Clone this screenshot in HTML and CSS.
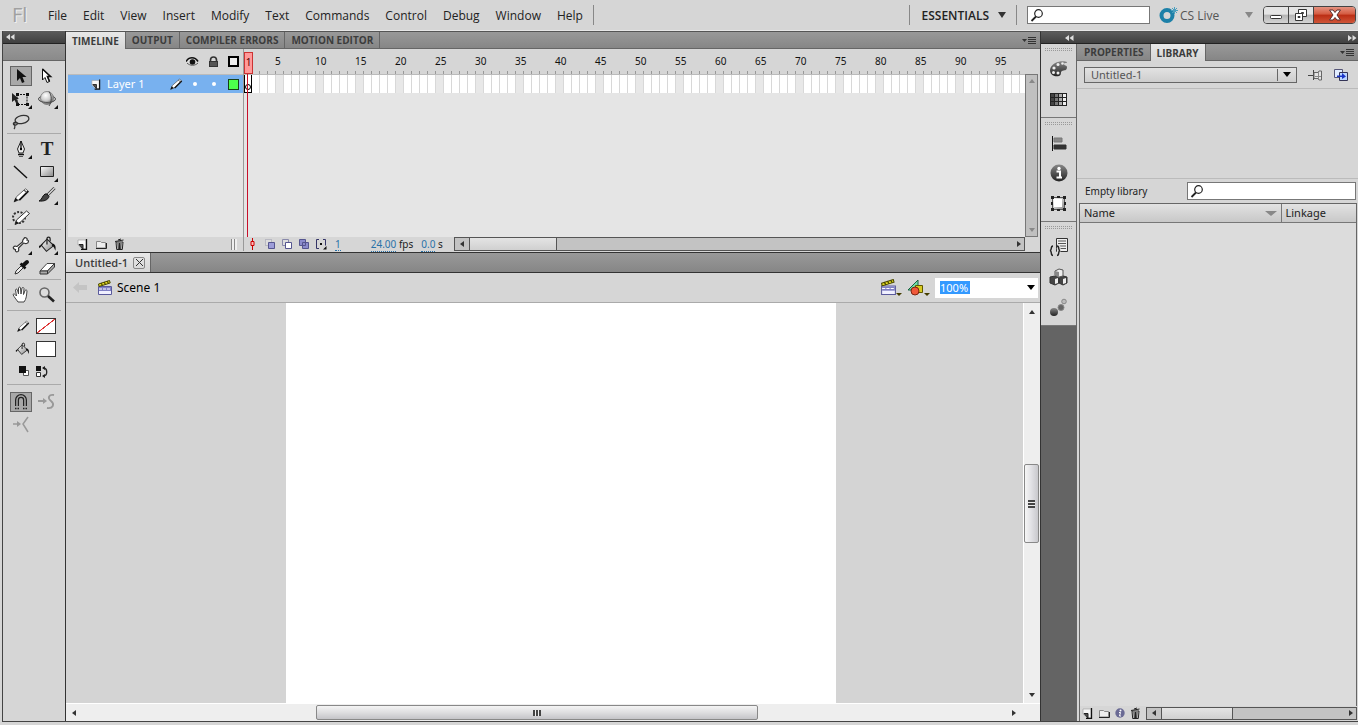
FILE: index.html
```html
<!DOCTYPE html>
<html lang="en">
<head>
    <meta charset="UTF-8">
    <meta name="viewport" content="width=device-width, initial-scale=1.0">
    <title>Untitled-1</title>
    <link rel="stylesheet" href="styles.css">
</head>
<body>
    <!-- shared icons and gradients -->
    <svg class="defs" width="0" height="0" aria-hidden="true">
        <defs>
            <linearGradient id="metal" x1="0" y1="0" x2="1" y2="1"><stop offset="0" stop-color="#fff"/><stop offset="1" stop-color="#888"/></linearGradient>
            <radialGradient id="ball" cx=".4" cy=".3" r=".8"><stop offset="0" stop-color="#fff"/><stop offset=".5" stop-color="#ccc"/><stop offset="1" stop-color="#444"/></radialGradient>
            <linearGradient id="dark" x1="0" y1="0" x2="0" y2="1"><stop offset="0" stop-color="#888"/><stop offset="1" stop-color="#222"/></linearGradient>
        </defs>
        <symbol id="mag" viewBox="0 0 14 14"><circle cx="8.500" cy="5.500" r="3.800" fill="none" stroke="#222" stroke-width="1.200"/><path d="M6 8.500 1.500 13" stroke="#222" stroke-width="1.800"/></symbol>
        <symbol id="menu-lines" viewBox="0 0 14 9"><path d="M0 3h5L2.500 6z" fill="#333"/><path d="M6 1.500h8M6 3.500h8M6 5.500h8M6 7.500h8" stroke="#333"/></symbol>
        <symbol id="new-page" viewBox="0 0 11 11"><path d="M1 1h8v9H5L1 6z" fill="#f8f8f8" stroke="#999" stroke-width=".6"/><path d="M9.500 0v10.500H4" stroke="#111" stroke-width="1.300" fill="none"/><path d="M2 5.500h4V10z" fill="#555" stroke="#222"/></symbol>
        <symbol id="folder" viewBox="0 0 12 11"><path d="M1.500 9V2.500h4l1 1h4V9z" fill="#eee" stroke="#888"/><path d="M1 9.500h10.500V4" stroke="#222" fill="none"/></symbol>
        <symbol id="trash" viewBox="0 0 11 12"><path d="M2 4h7l-.7 7.500H2.700z" fill="#ddd" stroke="#222"/><path d="M1 3.500 9.500 2M4 2l3-1M4 5l.3 6M5.500 5v6M7 5l-.3 6" stroke="#222"/></symbol>
        <symbol id="pencil" viewBox="0 0 16 16"><path d="M2 14l2-4.500 8-7 2.500 2L7 12z" fill="#fff" stroke="#555" stroke-width=".8"/><path d="M1.500 14.500 3 10.500l2.500 2z" fill="#111"/><path d="M6.500 12.500 14.500 4.500" stroke="#111" stroke-width="1.600"/><path d="M10.500 3.500l2.500 2" stroke="#555"/></symbol>
        <symbol id="bucket" viewBox="0 0 18 16"><path d="M8.500 3 15 9l-7 5.500L3 8.500z" fill="url(#metal)" stroke="#222"/><path d="M8.500 8V2.500a1.500 1.500 0 0 1 3 0V5" fill="none" stroke="#222" stroke-width="1.200"/><path d="M3 8.500C.500 9 .500 10 1.500 11.500L5 7.500zM14 7c3 1 3 4 2.500 7-1-2-1-4-3.500-5z" fill="#111"/></symbol>
        <symbol id="clapper" viewBox="0 0 16 16"><path d="M1.500 6.500h13v8h-13z" fill="#f0f0ff" stroke="#5a5a9c"/><path d="M2 7h12v4H2z" fill="#8080c4"/><path d="M2 9h12" stroke="#fff" stroke-dasharray="3 1"/><path d="M1.500 4 12.500.500l.7 2.500L2 6.500z" fill="#e5dc22" stroke="#4b4800"/><path d="m4 3 1.500 2.500M7 2l1.500 2.500M10 1l1.500 2.500" stroke="#4b4800" stroke-width="1.200"/></symbol>
    </svg>

    <header class="app-bar">
        <div class="logo">Fl</div>
        <nav class="menu">
            <a href="#">File</a>
            <a href="#">Edit</a>
            <a href="#">View</a>
            <a href="#">Insert</a>
            <a href="#">Modify</a>
            <a href="#">Text</a>
            <a href="#">Commands</a>
            <a href="#">Control</a>
            <a href="#">Debug</a>
            <a href="#">Window</a>
            <a href="#">Help</a>
        </nav>
        <button class="workspace">ESSENTIALS <span class="tri"></span></button>
        <label class="search top-search"><svg width="14" height="14"><use href="#mag"/></svg><input type="text" aria-label="Search help"></label>
        <button class="cs-live">
            <svg width="19" height="18" viewBox="0 0 19 18"><circle cx="8" cy="9.500" r="5.500" fill="none" stroke="#1c80a8" stroke-width="4"/><path d="M15.500 1v7M12 4.500h7M13 2l5 5M18 2l-5 5" stroke="#4b9fbe"/></svg>
            <span>CS Live</span><span class="tri grey"></span>
        </button>
        <div class="window-buttons">
            <button aria-label="Minimize"><svg width="14" height="12" viewBox="0 0 14 12"><rect x="1.500" y="6.500" width="11" height="3" rx="1" fill="#fff" stroke="#333"/></svg></button>
            <button aria-label="Restore"><svg width="14" height="12" viewBox="0 0 14 12"><path d="M4.500.500h8v7h-8z" fill="#fff" stroke="#333"/><path d="M7.500 3.500h2v1h-2z" fill="#bbb" stroke="#333"/><path d="M1.500 4.500h7v7h-7z" fill="#fff" stroke="#333"/><path d="M4 7.500h2v1H4z" fill="#bbb" stroke="#333"/></svg></button>
            <button class="close" aria-label="Close"><svg width="14" height="12" viewBox="0 0 14 12"><path d="M1.500 1h3.500l2 2.500L9 1h3.500L9 6l3.500 5H9L7 8.500 5 11H1.500L5 6z" fill="#fff" stroke="#5a3030"/></svg></button>
        </div>
    </header>

    <main class="workspace-area">
        <aside class="tools">
            <div class="dark-head"><svg width="9" height="6" viewBox="0 0 9 6"><path d="M4 0v6L0 3zM8.500 0v6l-4-3z" fill="#ddd"/></svg></div>
            <div class="grab"></div>
            <div class="tool-group">
                <button class="on" aria-label="Selection"><svg width="20" height="18" viewBox="0 0 20 18"><path d="M6 2v12l3-3 2 5 2.500-1-2-5h4z" fill="#111"/></svg></button>
                <button aria-label="Subselection"><svg width="20" height="18" viewBox="0 0 20 18"><path d="M5.500 2v11L8 10.500l2 5 2.500-1-2-5h3z" fill="#fff" stroke="#111"/><path d="M5.500 2l8 7.500h-3l2 5" fill="none" stroke="#111" stroke-width="1.600"/></svg></button>
                <button class="more" aria-label="Free Transform"><svg width="20" height="18" viewBox="0 0 20 18"><path d="M6 4.500h10v10H6z" fill="none" stroke="#111" stroke-dasharray="2 1"/><path d="M5 3h3v3H5zM15 3h3v3h-3zM5 13h3v3H5zM15 13h3v3h-3z" fill="#111"/><path d="M1 3v9l2.500-2 2 4 2-1-2-4H8z" fill="#222"/></svg></button>
                <button class="more" aria-label="3D Rotation"><svg width="20" height="18" viewBox="0 0 20 18"><ellipse cx="10" cy="9" rx="8.500" ry="3.500" fill="none" stroke="#444"/><circle cx="10" cy="8" r="6.500" fill="url(#ball)" stroke="#777" stroke-width=".8"/><path d="M3.500 11c3 2 10 2 13 0" fill="none" stroke="#555"/><path d="M12 1.500c3 4 3 10 0 14.500" fill="none" stroke="#444"/></svg></button>
                <button aria-label="Lasso"><svg width="20" height="18" viewBox="0 0 20 18"><ellipse cx="11" cy="6.500" rx="7" ry="4" transform="rotate(-12 11 6.500)" fill="none" stroke="#333" stroke-width="1.300"/><path d="M5 9c-4 0-3 4 0 3s0-4-1-2 1 4-1 6" fill="none" stroke="#333" stroke-width="1.200"/></svg></button>
            </div>
            <div class="tool-group">
                <button class="more" aria-label="Pen"><svg width="20" height="18" viewBox="0 0 20 18"><path d="M10 1 6.500 9 8 13h4l1.500-4z" fill="#eee" stroke="#222"/><path d="M10 1v8M7 14.500h6" stroke="#111" stroke-width="1.300"/><circle cx="10" cy="9" r="1.200"/><path d="M8 16.500h4" stroke="#555"/></svg></button>
                <button class="type" aria-label="Text">T</button>
                <button aria-label="Line"><svg width="20" height="18" viewBox="0 0 20 18"><path d="m3 3 13 12" stroke="#111" stroke-width="1.400"/></svg></button>
                <button class="more" aria-label="Rectangle"><svg width="20" height="18" viewBox="0 0 20 18"><path d="M3.500 3.500h13v10h-13z" fill="url(#metal)" stroke="#222"/></svg></button>
                <button aria-label="Pencil"><svg width="18" height="18"><use href="#pencil"/></svg></button>
                <button class="more" aria-label="Brush"><svg width="20" height="18" viewBox="0 0 20 18"><path d="m17.500 2-7 7" stroke="#333" stroke-width="3"/><path d="m17.500 2-7 7" stroke="#ddd" stroke-width="1.500"/><path d="M10 8l2 2.500C11 14 7 15.500 2 15c3-1 3-5 6-7z" fill="#444" stroke="#111"/></svg></button>
                <button aria-label="Deco"><svg width="20" height="18" viewBox="0 0 20 18"><ellipse cx="8" cy="8.500" rx="6" ry="5.500" fill="none" stroke="#333" stroke-width="2" stroke-dasharray="2 1.500"/><path d="M4 15.500l1.500-4.500 10-9 3 2.500-9.500 9z" fill="#fff" stroke="#333"/><path d="M4 15.500l1.500-3.500 2 2z" fill="#111"/></svg></button>
            </div>
            <div class="tool-group">
                <button class="more" aria-label="Bone"><svg width="20" height="18" viewBox="0 0 20 18"><path d="M13 2.500c1-2 4 0 3 1.500 2 0 2 3-.5 3.500-1.500.500-2-.5-3-.5L7.500 12c0 1 1 2-.5 3.500-2 1-3-.5-2.500-2-2 0-3-2-1.500-3 1-1 2 0 3 0L11.500 6c0-1.500.2-2.500 1.500-3.500z" fill="#fff" stroke="#333" stroke-width="1.200"/></svg></button>
                <button class="more" aria-label="Paint Bucket"><svg width="19" height="17"><use href="#bucket"/></svg></button>
                <button aria-label="Eyedropper"><svg width="20" height="18" viewBox="0 0 20 18"><path d="m4 15 1-3 6-6 2 2-6 6z" fill="#eee" stroke="#333"/><path d="m9.500 4.500 5 5" stroke="#111" stroke-width="2.500"/><path d="M12 6.500l4-3.500" stroke="#111" stroke-width="4" stroke-linecap="round"/></svg></button>
                <button aria-label="Eraser"><svg width="20" height="18" viewBox="0 0 20 18"><path d="m3 12 7-7.500h7.500l-7 7.500z" fill="#fff" stroke="#444"/><path d="M3 12h7.500v3H3zM10.500 12l7-7.500V8l-7 7z" fill="#aaa" stroke="#333"/></svg></button>
            </div>
            <div class="tool-group view-group">
                <button aria-label="Hand"><svg width="20" height="18" viewBox="0 0 20 18"><path d="M7 16C5 13 3 11 2 8.500c1-1 2-.5 3.500 1.500L4.500 4c.5-1.500 1.500-1 2 0l1 4V2c.5-1.500 2-1 2 0l.5 6 1-6c.5-1 2-.5 2 .5l-.5 6L14 4.500c1-1 2-.5 2 .5-.5 4-.5 8-3 11z" fill="#fff" stroke="#444"/></svg></button>
                <button aria-label="Zoom"><svg width="20" height="18" viewBox="0 0 20 18"><circle cx="7.500" cy="6.500" r="4.500" fill="#ddd" stroke="#666" stroke-width="1.600"/><path d="m11 10 6 5.500" stroke="#222" stroke-width="2.600"/></svg></button>
            </div>
            <div class="tool-group colors">
                <svg width="14" height="14"><use href="#pencil"/></svg>
                <button class="swatch none" aria-label="Stroke color"></button>
                <svg width="15" height="14"><use href="#bucket"/></svg>
                <button class="swatch" aria-label="Fill color"></button>
                <button aria-label="Black and white"><svg width="11" height="11" viewBox="0 0 11 11"><path d="M4.500 4.500h5v5h-5z" fill="#fff" stroke="#555"/><path d="M0 0h7v7H0z" fill="#111"/></svg></button>
                <button aria-label="Swap colors"><svg width="13" height="12" viewBox="0 0 13 12"><path d="M0 0h5v5H0z" fill="#111"/><path d="M.5 6.500h4v4h-4z" fill="#fff" stroke="#333"/><path d="M7 2c5 0 5 8 0 8" fill="none" stroke="#222" stroke-width="1.300"/><path d="M9 0v4L6 2zM9 8v4l-3-2z" fill="#222"/></svg></button>
            </div>
            <div class="tool-group last">
                <button class="on" aria-label="Snap to Objects"><svg width="16" height="17" viewBox="0 0 16 17"><path d="M4 13V7a4 4 0 0 1 8 0v6" fill="none" stroke="#222" stroke-width="4"/><path d="M4 13V7a4 4 0 0 1 8 0v6" fill="none" stroke="#aaa" stroke-width="1.500"/><path d="M2 15.500h4M10 15.500h4" stroke="#222" stroke-width="1.500" stroke-dasharray="1.500 1"/></svg></button>
                <button aria-label="Smooth"><svg width="20" height="18" viewBox="0 0 20 18"><path d="M1 8h6M17 2c-5-1-7 3-3 6s2 8-4 7" fill="none" stroke="#999" stroke-width="1.800"/><path d="M6 5v6l4-3z" fill="#999"/></svg></button>
                <button aria-label="Straighten"><svg width="20" height="18" viewBox="0 0 20 18"><path d="M2 8h6M17 1l-5 7 5 8" fill="none" stroke="#999" stroke-width="1.500"/><path d="M6 5v6l4-3z" fill="#999"/></svg></button>
            </div>
        </aside>

        <section class="center">
            <div class="tabs">
                <button class="tab active">TIMELINE</button>
                <button class="tab">OUTPUT</button>
                <button class="tab">COMPILER ERRORS</button>
                <button class="tab">MOTION EDITOR</button>
                <svg class="panel-menu" width="14" height="9"><use href="#menu-lines"/></svg>
            </div>

            <div class="timeline">
                <div class="layers">
                    <div class="layer-head">
                        <svg width="13" height="10" viewBox="0 0 13 10"><path d="M0 5c3-5 9-5 12 0-3 4-9 4-12 0z" fill="#ddd"/><path d="M0 4.500c3-5 9-5 12 0" fill="none" stroke="#111" stroke-width="1.500"/><circle cx="6.500" cy="5" r="2.800" fill="#111"/><path d="M1 6c3 3 8 3 11 0" fill="none" stroke="#555"/></svg>
                        <svg width="11" height="12" viewBox="0 0 11 12"><path d="M2.500 6V4a3 3 0 0 1 6 0v2" fill="none" stroke="#333" stroke-width="1.600"/><path d="M1 5h9v6H1z" fill="#333"/><path d="M2 7h7M2 9h7" stroke="#777"/></svg>
                        <span class="outline-box"></span>
                    </div>
                    <div class="layer-row">
                        <svg class="layer-icon" width="10" height="11"><use href="#new-page"/></svg>
                        <span class="layer-name">Layer 1</span>
                        <svg class="layer-pen" width="14" height="14"><use href="#pencil"/></svg>
                        <span class="dot"></span>
                        <span class="dot"></span>
                        <span class="color-box"></span>
                    </div>
                </div>
                <div class="frames">
                    <div class="ruler">
                        <span>5</span><span>10</span><span>15</span><span>20</span><span>25</span><span>30</span><span>35</span><span>40</span><span>45</span><span>50</span><span>55</span><span>60</span><span>65</span><span>70</span><span>75</span><span>80</span><span>85</span><span>90</span><span>95</span>
                    </div>
                    <div class="frame-row"><span class="keyframe"><span></span></span></div>
                    <div class="playhead"><span>1</span></div>
                </div>
                <div class="tl-scroll">
                    <span class="arrow up"></span>
                    <span class="arrow down"></span>
                </div>
            </div>
            <div class="tl-foot">
                <div class="layer-actions">
                    <button aria-label="New Layer"><svg width="11" height="11"><use href="#new-page"/></svg></button>
                    <button aria-label="New Folder"><svg width="12" height="11"><use href="#folder"/></svg></button>
                    <button aria-label="Delete"><svg width="11" height="12"><use href="#trash"/></svg></button>
                    <span class="divider-grip"></span>
                </div>
                <div class="frame-actions">
                    <button aria-label="Center Frame"><svg width="5" height="12" viewBox="0 0 5 12"><path d="M2.500 0v12" stroke="#c00"/><path d="M1 3.500h3v4H1z" fill="#fbb" stroke="#c00"/></svg></button>
                    <button aria-label="Onion Skin"><svg width="11" height="11" viewBox="0 0 11 11"><path d="M.5.500h6v6h-6z" fill="#ddd" stroke="#99a" stroke-dasharray="1 1"/><path d="M3.500 3.500h6v6h-6z" fill="#9c9cd8" stroke="#55558f"/></svg></button>
                    <button aria-label="Onion Skin Outlines"><svg width="11" height="11" viewBox="0 0 11 11"><path d="M.5.500h6v6h-6z" fill="#ddd" stroke="#88a"/><path d="M3.500 3.500h6v6h-6z" fill="#fff" stroke="#55558f"/></svg></button>
                    <button aria-label="Edit Multiple Frames"><svg width="11" height="11" viewBox="0 0 11 11"><path d="M.5.500h6v6h-6zM3.500 3.500h6v6h-6z" fill="#8c8ccc" stroke="#55558f"/></svg></button>
                    <button aria-label="Modify Markers"><svg width="11" height="11" viewBox="0 0 11 11"><path d="M3 .5H.5v9H3M7 .5h2.500v6" fill="none" stroke="#336"/><path d="M4 4h2v2H4zM7 10.500h3.500V7z" fill="#111"/></svg></button>
                </div>
                <div class="readouts">
                    <a href="#" class="frame-no">1</a>
                    <span class="fps"><a href="#">24.00</a> fps</span>
                    <span><a href="#">0.0</a> s</span>
                </div>
                <div class="hscroll">
                    <span class="arrow left"></span>
                    <span class="thumb"></span>
                    <span class="arrow right"></span>
                </div>
            </div>

            <div class="tabs doc-tabs">
                <div class="tab active">Untitled-1 <button class="tab-close" aria-label="Close Untitled-1"><svg width="7" height="7" viewBox="0 0 7 7"><path d="m0 0 7 7M7 0 0 7" stroke="#333"/></svg></button></div>
            </div>
            <div class="edit-bar">
                <svg width="14" height="12" viewBox="0 0 14 12"><path d="M6 0v3h8v5H6v3L0 5.500z" fill="#c4c4c4"/></svg>
                <svg class="scene-icon" width="16" height="16"><use href="#clapper"/></svg>
                <span class="scene">Scene 1</span>
                <button class="more gold" aria-label="Edit Scene"><svg width="17" height="17"><use href="#clapper"/></svg></button>
                <button class="more gold" aria-label="Edit Symbols"><svg width="18" height="17" viewBox="0 0 18 17"><path d="M1 11 11 1v10z" fill="#6fe0a8" stroke="#186040"/><path d="M8.500 6.500h7v7h-7z" fill="#d8cb20" stroke="#605800"/><circle cx="8" cy="12" r="4" fill="#f0583a" stroke="#7c2410"/></svg></button>
                <div class="zoom-box">
                    <input type="text" value="100%" aria-label="Zoom">
                    <button aria-label="Zoom levels"><span class="tri black"></span></button>
                </div>
            </div>
            <div class="stage-wrap">
                <div class="pasteboard"><div class="stage"></div></div>
                <div class="win-scroll vertical">
                    <span class="arrow up"></span>
                    <span class="thumb"><i></i></span>
                    <span class="arrow down"></span>
                </div>
            </div>
            <div class="win-scroll horizontal">
                <span class="arrow left"></span>
                <span class="track-a"></span>
                <span class="thumb"><i></i></span>
                <span class="track-b"></span>
                <span class="arrow right"></span>
                <span class="corner"></span>
            </div>
        </section>

        <aside class="side">
            <div class="dark-head">
                <svg width="9" height="6" viewBox="0 0 9 6"><path d="M4 0v6L0 3zM8.500 0v6l-4-3z" fill="#ddd"/></svg>
                <svg width="9" height="6" viewBox="0 0 9 6"><path d="M0 0v6l4-3zM4.500 0v6l4-3z" fill="#ddd"/></svg>
            </div>
            <div class="side-body">
                <div class="dock">
                    <div class="dock-group">
                        <button aria-label="Color"><svg width="20" height="18" viewBox="0 0 20 18"><path d="M18 2c-3-2-16-1-17 8 0 6 6 7 9 6s1-4 3-5 5 0 5-4c0-2-3-1-3-3s3 0 3-2z" fill="url(#dark)"/><circle cx="5" cy="8" r="1.600" fill="#eee"/><circle cx="9" cy="4.500" r="1.500" fill="#eee"/><circle cx="13.500" cy="3.500" r="1.300" fill="#eee"/><circle cx="4.500" cy="12.500" r="1.500" fill="#eee"/><circle cx="9" cy="13" r="1.500" fill="#eee"/></svg></button>
                        <button aria-label="Swatches"><svg width="17" height="13" viewBox="0 0 17 13"><path d="M0 0h17v13H0z" fill="#222"/><path d="M1 1h3v3H1zM1 5h3v3H1zM1 9h3v3H1z" fill="#444"/><path d="M5 1h3v3H5zM5 5h3v3H5zM5 9h3v3H5z" fill="#777"/><path d="M9 1h3v3H9zM9 5h3v3H9zM9 9h3v3H9z" fill="#aaa"/><path d="M13 1h3v3h-3zM13 5h3v3h-3zM13 9h3v3h-3z" fill="#eee"/></svg></button>
                    </div>
                    <div class="dock-group">
                        <button aria-label="Align"><svg width="16" height="15" viewBox="0 0 16 15"><path d="M1.500 0v15" stroke="#111"/><path d="M3 2h8v4H3z" fill="#888" stroke="#777"/><path d="M3 9h12v4H3z" fill="#333" stroke="#333"/></svg></button>
                        <button aria-label="Info"><svg width="18" height="18" viewBox="0 0 18 18"><circle cx="9" cy="9" r="8.500" fill="url(#dark)"/><circle cx="9" cy="4.500" r="1.700" fill="#fff"/><path d="M6.500 7.500H10V13M6.500 13.500h5.500" stroke="#fff" stroke-width="2" fill="none"/></svg></button>
                        <button aria-label="Transform"><svg width="17" height="17" viewBox="0 0 17 17"><path d="M2.500 2.500h12v12h-12z" fill="url(#metal)" stroke="#555"/><path d="M4 4h8v8H4z" fill="#fff"/><path d="M1 1h3v3H1zM7 1h3v2H7zM13 1h3v3h-3zM1 13h3v3H1zM7 14h3v2H7zM13 13h3v3h-3zM1 7h2v3H1zM14 7h2v3h-2z" fill="#222"/></svg></button>
                    </div>
                    <div class="dock-group">
                        <button aria-label="Code Snippets"><svg width="20" height="19" viewBox="0 0 20 19"><path d="M7.500.500h11v13h-11z" fill="#eee" stroke="#333"/><path d="M9 3h8M9 5.500h8M9 8h8M9 10.500h8" stroke="#555"/><path d="M4 8C1 8 3.500 12 1 12.500 3.500 13 1 17.500 4 17.500M8 8c3 0 .5 4 3 4.500-2.500.5 0 5-3 5" fill="none" stroke="#ddd" stroke-width="4"/><path d="M4 8C1 8 3.500 12 1 12.500 3.500 13 1 17.500 4 17.500M8 8c3 0 .5 4 3 4.500-2.500.5 0 5-3 5" fill="none" stroke="#222" stroke-width="1.500"/></svg></button>
                        <button aria-label="Components"><svg width="20" height="18" viewBox="0 0 20 18"><path d="m1 9 5-1 4 2v5l-4 2-5-2zM10 10l4-2 4 1v6l-4 2-4-2z" fill="#444" stroke="#333"/><path d="m6 11 3-1v5l-3 1zM14 11l3-1v5l-3 1z" fill="#eee"/><path d="M6 3 10 1l4 1v6l-4 1-4-2z" fill="#eee" stroke="#555"/><path d="m6 3 4 1v5l-4-2z" fill="#888"/></svg></button>
                        <button aria-label="Motion Presets"><svg width="19" height="19" viewBox="0 0 19 19"><circle cx="15" cy="3.500" r="2.300" fill="#bbb" stroke="#888"/><circle cx="12" cy="9.500" r="3" fill="#666" stroke="#888"/><circle cx="5" cy="14" r="4" fill="url(#dark)"/></svg></button>
                    </div>
                </div>

                <section class="library">
                    <div class="tabs">
                        <button class="tab">PROPERTIES</button>
                        <button class="tab active">LIBRARY</button>
                        <svg class="panel-menu" width="14" height="9"><use href="#menu-lines"/></svg>
                    </div>
                    <div class="doc-pick">
                        <div class="select-box">
                            <select aria-label="Document"><option>Untitled-1</option></select>
                            <span class="tri black"></span>
                        </div>
                        <button aria-label="Pin library"><svg width="15" height="12" viewBox="0 0 15 12"><path d="M0 6.500h6" stroke="#444"/><path d="M5.500 1v10" stroke="#444"/><path d="M6 3.500h4l1-1.500h2.500v9H11l-1-1.500H6z" fill="#e4e4e4" stroke="#666"/><path d="M7 7.500h6M10.500 3v7" stroke="#888"/></svg></button>
                        <button aria-label="New library panel"><svg width="15" height="12" viewBox="0 0 15 12"><path d="M.500.500h8v8h-8z" fill="#e2edff" stroke="#557"/><path d="M5.500 3.500h8v8h-8z" fill="#bcd6ff" stroke="#335"/><path d="M3 6.500h5V4l4 3.500L8 10V8H3z" fill="#1a35c8"/></svg></button>
                    </div>
                    <div class="preview"></div>
                    <div class="lib-search">
                        <span>Empty library</span>
                        <label class="search"><svg width="14" height="14"><use href="#mag"/></svg><input type="text" aria-label="Search library"></label>
                    </div>
                    <div class="lib-list">
                        <table>
                            <thead>
                                <tr><th class="name">Name<span class="tri grey"></span></th><th>Linkage</th></tr>
                            </thead>
                        </table>
                    </div>
                    <div class="lib-foot">
                        <button aria-label="New Symbol"><svg width="11" height="11"><use href="#new-page"/></svg></button>
                        <button aria-label="New Folder"><svg width="12" height="11"><use href="#folder"/></svg></button>
                        <button aria-label="Properties"><svg width="10" height="10" viewBox="0 0 10 10"><circle cx="5" cy="5" r="4.700" fill="#6a6a94"/><circle cx="5.500" cy="2.500" r="1" fill="#fff"/><path d="M4 4.500h1.500L4.500 8H6" stroke="#fff" fill="none"/></svg></button>
                        <button aria-label="Delete"><svg width="11" height="12"><use href="#trash"/></svg></button>
                        <div class="hscroll">
                            <span class="arrow left"></span>
                            <span class="thumb"></span>
                            <span class="arrow right"></span>
                        </div>
                    </div>
                </section>
            </div>
        </aside>
    </main>
</body>
</html>
```
FILE: styles.css
```css
* {
    box-sizing: border-box;
}
body {
    margin: 0;
    height: 100vh;
    display: flex;
    flex-direction: column;
    overflow: hidden;
    background: #d6d6d6;
    font-family: "Noto Sans", "Open Sans", sans-serif;
    font-size: 11px;
    color: #222;
}
button, input, select {
    font: inherit;
    color: inherit;
    margin: 0;
    padding: 0;
    border: none;
    background: none;
}
a {
    color: inherit;
    text-decoration: none;
}
svg {
    display: block;
    flex: none;
}
.defs {
    position: absolute;
}
.tri {
    display: inline-block;
    border: 4px solid transparent;
    border-top: 6px solid #333;
    border-bottom: none;
}
.tri.grey {
    border-top-color: #888;
}
.tri.black {
    border-top: 5px solid #000;
}

/* top bar */
.app-bar {
    flex: none;
    height: 31px;
    display: flex;
    align-items: center;
    border-bottom: 1px solid #e8e8e8;
}
.logo {
    width: 48px;
    padding-left: 12px;
    font-family: "Open Sans", sans-serif;
    font-size: 20px;
    line-height: 26px;
    color: #a0a0a0;
    text-shadow: 1px 1px 0 #f0f0f0;
}
.menu {
    display: flex;
    gap: 16px;
    height: 20px;
    align-items: center;
    padding-right: 10px;
    border-right: 1px solid #888;
    font-family: "Open Sans", sans-serif;
    font-size: 12px;
}
.workspace {
    display: flex;
    align-items: center;
    gap: 9px;
    height: 20px;
    margin-left: auto;
    padding: 0 10px 0 12px;
    border-left: 1px solid #888;
    border-right: 1px solid #888;
    font-family: "Open Sans", sans-serif;
    font-size: 12px;
    font-weight: 600;
}
.search {
    display: flex;
    align-items: center;
    height: 18px;
    padding-left: 2px;
    background: #fff;
    border: 1px solid #777;
}
.search input {
    flex: 1;
    min-width: 0;
    outline: none;
}
.top-search {
    width: 123px;
    margin: 0 9px 0 10px;
}
.cs-live {
    display: flex;
    align-items: center;
    gap: 2px;
    width: 94px;
    font-family: "Open Sans", sans-serif;
    font-size: 12px;
    color: #555;
}
.cs-live .tri {
    margin-left: auto;
}
.window-buttons {
    display: flex;
    height: 18px;
    margin: 0 2px 0 10px;
    border: 1px solid #444;
    border-radius: 4px;
    overflow: hidden;
}
.window-buttons button {
    width: 25px;
    display: flex;
    align-items: center;
    justify-content: center;
    border-right: 1px solid #444;
    background: linear-gradient(#e4e4e4 45%, #b4b4b4 50%, #d4d4d4);
}
.window-buttons .close {
    width: 41px;
    border-right: none;
    background: linear-gradient(#e59280, #d35a40 45%, #bb2d14 50%, #cf5538);
}

.workspace-area {
    flex: 1;
    min-height: 0;
    display: flex;
    margin: 0 0 3px 2px;
    border-bottom: 1px solid #444;
}
.dark-head {
    flex: none;
    height: 13px;
    display: flex;
    align-items: center;
    padding: 0 3px;
    background: linear-gradient(#5c5c5c, #404040);
    border-bottom: 1px solid #222;
}

/* tools */
.tools {
    flex: none;
    width: 64px;
    border-left: 1px solid #444;
    border-right: 1px solid #333;
}
.grab {
    height: 17px;
    background: linear-gradient(#999, #8a8a8a);
    border-bottom: 1px solid #666;
}
.tool-group {
    display: grid;
    grid-template-columns: 22px 22px;
    grid-auto-rows: 23px;
    column-gap: 4px;
    align-items: center;
    margin: 0 4px;
    padding: 3px 3px 0;
    border-bottom: 1px solid #aaa;
}
.tool-group button {
    height: 20px;
    display: flex;
    align-items: center;
    justify-content: center;
}
.tool-group .on {
    background: #a8a8a8;
    border: 1px solid #666;
}
.more {
    position: relative;
}
.more::after {
    content: "";
    position: absolute;
    right: 0;
    bottom: 0;
    border-left: 4px solid transparent;
    border-bottom: 4px solid #111;
}
.tool-group .type {
    font-family: "Liberation Serif", serif;
    font-size: 19px;
    font-weight: bold;
}
.view-group {
    padding-bottom: 4px;
}
.colors {
    padding-bottom: 1px;
}
.colors > svg, .colors > button {
    justify-self: center;
}
.colors > :nth-child(odd) {
    justify-self: end;
    margin-right: 2px;
}
.colors > :last-child {
    justify-self: start;
}
.colors .swatch {
    width: 20px;
    height: 16px;
    justify-self: start;
    background: #fff;
    border: 1px solid #333;
}
.colors .swatch.none {
    background: linear-gradient(to bottom right, #fff 47%, #d33 48%, #d33 52%, #fff 53%);
}
.last {
    border-bottom: none;
    padding-top: 5px;
}

/* center column */
.center {
    flex: 1;
    min-width: 0;
    display: flex;
    flex-direction: column;
    border-top: 1px solid #555;
    border-right: 1px solid #333;
}
.tabs {
    flex: none;
    display: flex;
    height: 17px;
    background: linear-gradient(#999, #868686);
    border-bottom: 1px solid #666;
    font-family: "Open Sans", sans-serif;
    font-size: 10px;
    font-weight: bold;
    color: #3c3c3c;
}
.tab {
    display: flex;
    align-items: center;
    padding: 0 6px;
    border-right: 1px solid #666;
}
.tab.active {
    height: 17px;
    background: linear-gradient(#e8e8e8, #d6d6d6);
}
.panel-menu {
    margin: 4px 4px 0 auto;
}
.timeline {
    flex: none;
    height: 188px;
    display: flex;
    padding: 0 2px;
}
.layers {
    width: 176px;
    border-right: 1px solid #999;
    background: #e5e5e5;
}
.layer-head {
    height: 26px;
    display: flex;
    align-items: center;
    justify-content: flex-end;
    gap: 9px;
    padding-right: 4px;
    background: #d6d6d6;
    border-bottom: 1px solid #bbb;
}
.outline-box {
    width: 11px;
    height: 11px;
    border: 2px solid #000;
    background: #eee;
}
.layer-row {
    height: 18px;
    display: flex;
    align-items: center;
    padding: 0 4px 0 23px;
    background: #78b1ef;
    color: #fff;
}
.layer-name {
    margin-left: 6px;
    margin-right: auto;
    padding-bottom: 2px;
}
.layer-pen {
    margin-right: 10px;
}
.dot {
    width: 4px;
    height: 4px;
    margin-right: 15px;
    border-radius: 2px;
    background: #fff;
}
.dot + .dot {
    margin-right: 12px;
}
.color-box {
    width: 11px;
    height: 11px;
    background: #4cff4c;
    border: 1px solid #173f17;
}
.frames {
    position: relative;
    flex: 1;
    min-width: 0;
    overflow: hidden;
    background: #e5e5e5;
}
.ruler {
    display: flex;
    height: 26px;
    padding-left: 31px;
    line-height: 24px;
    font-size: 10px;
    color: #111;
    background: repeating-linear-gradient(90deg, transparent 0 7px, #999 7px 8px) 0 22px / 100% 3px no-repeat #d6d6d6;
    border-bottom: 1px solid #bbb;
}
.ruler span {
    flex: none;
    width: 40px;
}
.frame-row {
    height: 18px;
    background: repeating-linear-gradient(90deg, transparent 0 7px, #d8d8d8 7px 8px), repeating-linear-gradient(90deg, #fff 0 32px, #e8e8e8 32px 40px);
}
.keyframe {
    display: flex;
    align-items: flex-end;
    justify-content: center;
    width: 8px;
    height: 18px;
    padding-bottom: 2px;
    background: #fff;
    border: 1px solid #000;
    border-top: none;
}
.keyframe span {
    flex: none;
    width: 6px;
    height: 6px;
    border: 1px solid #000;
    border-radius: 3px;
}
.playhead {
    position: absolute;
    top: 3px;
    left: 0;
    bottom: 0;
    width: 9px;
    display: flex;
    flex-direction: column;
    align-items: flex-start;
}
.playhead span {
    width: 9px;
    height: 22px;
    line-height: 18px;
    font-size: 10px;
    display: flex;
    justify-content: center;
    color: #500;
    background: #f99;
    border: 1px solid #c33;
}
.playhead::after {
    content: "";
    flex: 1;
    width: 1px;
    margin-left: 3px;
    background: #c8102a;
}
.tl-scroll {
    width: 13px;
    margin-top: 25px;
    display: flex;
    flex-direction: column;
    justify-content: space-between;
    align-items: center;
    padding: 4px 0;
    background: #c0c0c0;
    border: 1px solid #777;
}
.arrow {
    flex: none;
    width: 0;
    height: 0;
    border: 3px solid transparent;
}
.arrow.up {
    border-top: none;
    border-bottom: 4px solid #333;
}
.arrow.down {
    border-bottom: none;
    border-top: 4px solid #333;
}
.arrow.left {
    border-left: none;
    border-right: 4px solid #333;
}
.arrow.right {
    border-right: none;
    border-left: 4px solid #333;
}
.tl-scroll .arrow.up {
    border-bottom-color: #888;
}
.tl-scroll .arrow.down {
    border-top-color: #888;
}
.tl-foot {
    flex: none;
    height: 15px;
    display: flex;
    padding: 0 15px 1px 2px;
}
.layer-actions {
    display: flex;
    align-items: center;
    gap: 7px;
    width: 176px;
    padding: 0 6px 0 9px;
    border-right: 1px solid #999;
}
.divider-grip {
    width: 6px;
    height: 11px;
    margin-left: auto;
    background: repeating-linear-gradient(90deg, #888 0 1px, #eee 1px 3px);
}
.frame-actions {
    display: flex;
    align-items: center;
    gap: 6px;
    padding-left: 6px;
}
.frame-actions button:first-child {
    margin-right: 4px;
}
.readouts {
    display: flex;
    align-items: center;
    width: 127px;
    padding-left: 8px;
    font-size: 10px;
    line-height: 12px;
    white-space: nowrap;
}
.readouts a {
    color: #2a72a8;
    border-bottom: 1px dotted #2a72a8;
}
.frame-no {
    margin-right: 30px;
}
.fps {
    margin-right: 8px;
}
.hscroll {
    flex: 1;
    height: 14px;
    display: flex;
    align-items: center;
    background: #c3c3c3;
    border: 1px solid #555;
}
.hscroll .left {
    margin: 0 5px;
}
.hscroll .right {
    margin-left: auto;
    margin-right: 3px;
}
.hscroll .thumb {
    align-self: stretch;
    width: 88px;
    background: linear-gradient(#e4e4e4, #d0d0d0);
    border: 1px solid #555;
    border-width: 0 1px;
}
.center .doc-tabs {
    height: 21px;
    border-top: 1px solid #333;
    border-bottom: 1px solid #333;
    font-size: 11px;
    font-weight: 600;
}
.doc-tabs .tab {
    height: 19px;
    gap: 5px;
    padding: 0 5px 0 9px;
}
.tab-close {
    width: 12px;
    height: 12px;
    display: flex;
    align-items: center;
    justify-content: center;
    border: 1px solid #888;
    border-radius: 2px;
}
.edit-bar {
    flex: none;
    height: 30px;
    display: flex;
    align-items: center;
    padding: 0 2px 0 7px;
    border-bottom: 1px solid #aaa;
}
.scene-icon {
    margin-left: 10px;
}
.scene {
    margin: 0 auto 0 4px;
    font-size: 12px;
    color: #000;
}
.gold {
    margin-right: 7px;
    padding-right: 3px;
}
.gold::after {
    border: 3px solid transparent;
    border-top: 3px solid #443c00;
    border-bottom: none;
    right: -2px;
}
.zoom-box {
    width: 103px;
    height: 20px;
    display: flex;
    align-items: center;
    justify-content: space-between;
    padding: 0 3px 0 5px;
    background: #fff;
}
.zoom-box input {
    width: 30px;
    height: 13px;
    background: #39f;
    color: #fff;
}
.zoom-box button {
    display: flex;
}
.stage-wrap {
    flex: 1;
    min-height: 0;
    display: flex;
}
.pasteboard {
    flex: 1;
    min-width: 0;
    padding-left: 220px;
    background: #d4d4d4;
}
.stage {
    width: 550px;
    max-width: 100%;
    height: 100%;
    background: #fff;
}
.win-scroll {
    flex: none;
    display: flex;
    align-items: center;
    background: #eee;
}
.win-scroll .thumb {
    display: flex;
    align-items: center;
    justify-content: center;
    border: 1px solid #888;
    border-radius: 2px;
}
.vertical {
    width: 17px;
    flex-direction: column;
    justify-content: space-between;
    padding: 7px 1px 6px 0;
    border-left: 1px solid #fff;
}
.vertical .thumb {
    width: 15px;
    height: 79px;
    background: linear-gradient(90deg, #f6f6f6, #e0e0e4 50%, #c8c8cc);
}
.vertical i {
    width: 7px;
    height: 8px;
    background: repeating-linear-gradient(#444 0 2px, #eee 2px 3px);
}
.horizontal {
    height: 18px;
    padding-left: 6px;
    border-top: 1px solid #fff;
}
.horizontal .thumb {
    flex: 0 1 442px;
    height: 15px;
    background: linear-gradient(#f4f4f4, #dedee0 50%, #c4c4c8);
}
.horizontal i {
    width: 8px;
    height: 6px;
    background: repeating-linear-gradient(90deg, #444 0 2px, #eee 2px 3px);
}
.track-a {
    flex: 240;
}
.track-b {
    flex: 254;
}
.corner {
    width: 24px;
}

/* right side */
.side {
    flex: none;
    width: 317px;
    display: flex;
    flex-direction: column;
    border-top: 1px solid #555;
}
.side .dark-head {
    height: 12px;
    justify-content: space-between;
    padding: 0 1px 0 24px;
}
.side-body {
    flex: 1;
    min-height: 0;
    display: flex;
}
.dock {
    width: 35px;
    background: #646464;
}
.dock-group {
    display: grid;
    grid-auto-rows: 30px;
    padding: 10px 0 3px;
    background: repeating-linear-gradient(90deg, #999 0 1px, transparent 1px 2px) 4px 4px / 27px 1px no-repeat, repeating-linear-gradient(90deg, #999 0 1px, transparent 1px 2px) 4px 6px / 27px 1px no-repeat, #d6d6d6;
    border-bottom: 1px solid #777;
}
.dock-group button {
    display: flex;
    align-items: center;
    justify-content: center;
}
.library {
    flex: 1;
    min-width: 0;
    display: flex;
    flex-direction: column;
    border-left: 1px solid #666;
}
.library .tab:first-child {
    padding-left: 7px;
}
.doc-pick {
    flex: none;
    height: 28px;
    display: flex;
    align-items: center;
    gap: 11px;
    padding: 0 9px 0 7px;
    border-bottom: 1px solid #bbb;
}
.select-box {
    flex: 1;
    height: 16px;
    display: flex;
    align-items: center;
    padding: 0 5px 0 6px;
    background: linear-gradient(#e2e2e2, #cdcdcd);
    border: 1px solid #666;
}
.select-box select {
    flex: 1;
    height: 12px;
    margin-right: 5px;
    appearance: none;
    border-right: 1px solid #666;
    line-height: 12px;
    color: #555;
}
.preview {
    flex: none;
    height: 90px;
    border-bottom: 1px solid #bbb;
}
.lib-search {
    flex: none;
    height: 24px;
    display: flex;
    align-items: center;
    padding-left: 8px;
    font-size: 10px;
}
.lib-search span {
    flex: 0 0 102px;
}
.lib-search .search {
    flex: 1;
    margin-right: 2px;
}
.lib-list {
    flex: 1;
    margin: 0 1px 0 2px;
    background: #dcdcdc;
    border: 1px solid #666;
    border-bottom: none;
}
.lib-list table {
    width: 100%;
    table-layout: fixed;
    border-collapse: collapse;
}
.lib-list th {
    height: 18px;
    padding: 0 4px;
    text-align: left;
    font-weight: normal;
    line-height: 16px;
    background: linear-gradient(#e2e2e2, #c8c8c8);
    border-bottom: 1px solid #777;
}
.lib-list .name {
    width: 201px;
    border-right: 1px solid #777;
}
.lib-list .tri {
    float: right;
    margin-top: 6px;
    border-width: 5px 6px 0;
}
.lib-foot {
    flex: none;
    height: 15px;
    display: flex;
    align-items: center;
    gap: 5px;
    margin-left: 2px;
    padding: 0 1px 1px 2px;
    border-left: 1px solid #666;
}
.lib-foot .hscroll {
    height: 13px;
}
.lib-foot .thumb {
    width: 72px;
}
```
